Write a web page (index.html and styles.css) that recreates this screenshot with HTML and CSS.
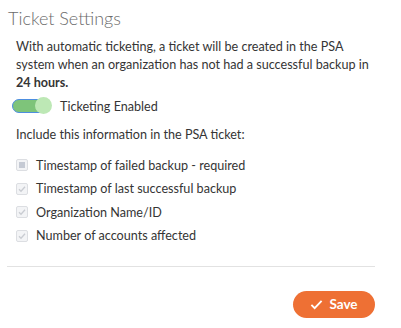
FILE: index.html
```html
<!DOCTYPE html>
<html>
<head>
<meta charset="utf-8">
<link rel="stylesheet" href="styles.css">
</head>
<body>
<div class="panel">
  <h2 class="title">Ticket Settings</h2>
  <div class="content">
    <p class="desc">With automatic ticketing, a ticket will be created in the PSA system when an organization has not had a successful backup in <b>24 hours.</b></p>
    <div class="toggle-row">
      <span class="toggle"><span class="knob"></span></span>
      <span class="toggle-label">Ticketing Enabled</span>
    </div>
    <p class="include">Include this information in the PSA ticket:</p>
    <ul class="checks">
      <li><span class="box"><span class="dot"></span></span>Timestamp of failed backup - required</li>
      <li><span class="box"><svg viewBox="0 0 12 12" width="12" height="12"><path d="M3 6.3 L5 8.3 L9 3.8" fill="none" stroke="#c9ccd2" stroke-width="1.3"/></svg></span>Timestamp of last successful backup</li>
      <li><span class="box"><svg viewBox="0 0 12 12" width="12" height="12"><path d="M3 6.3 L5 8.3 L9 3.8" fill="none" stroke="#c9ccd2" stroke-width="1.3"/></svg></span>Organization Name/ID</li>
      <li><span class="box"><svg viewBox="0 0 12 12" width="12" height="12"><path d="M3 6.3 L5 8.3 L9 3.8" fill="none" stroke="#c9ccd2" stroke-width="1.3"/></svg></span>Number of accounts affected</li>
    </ul>
  </div>
  <hr class="divider">
  <div class="actions">
    <button class="save"><svg viewBox="0 0 14 14" width="13" height="13"><path d="M1.5 7.5 L5 11 L12.5 3" fill="none" stroke="#fff" stroke-width="2"/></svg>Save</button>
  </div>
</div>
</body>
</html>
```
FILE: styles.css
```css
body{margin:0;background:#fff;font-family:Lato,"Open Sans",sans-serif;color:#353535}
.panel{padding:6px 26px 0 7px;width:368px}
.title{margin:0 0 0 1px;font-weight:300;font-size:18px;line-height:24px;color:#6b6b6b}
.content{padding:0 0 0 9px}
.desc{margin:8px 0 0;font-size:12.6px;line-height:18px}
.desc b{font-weight:700}
.toggle-row{display:flex;align-items:center;margin:5px 0 0 -4px;height:18px}
.toggle{position:relative;width:36px;height:12px;border:1.5px solid #4d8ee0;border-radius:8px;background:#7ec47a;box-sizing:content-box}
.knob{position:absolute;right:-3px;top:-3.5px;width:17px;height:17px;border-radius:50%;background:#bde8b5}
.toggle-label{margin-left:10px;font-size:12.6px}
.include{margin:10px 0 0;font-size:12.6px;line-height:19px}
.checks{list-style:none;margin:9.5px 0 0;padding:0}
.checks li{display:flex;align-items:center;height:23.5px;font-size:12.6px}
.box{width:12px;height:12px;border:1px solid #dcdee2;background:#f3f4f6;border-radius:2px;margin-right:8px;display:flex;align-items:center;justify-content:center;box-sizing:border-box}
.box svg{display:block;flex:none}
.dot{width:6px;height:6px;background:#c5cad4}
.divider{border:0;border-top:1.5px solid #e2e2e2;margin:18.5px 0 0;height:0}
.actions{display:flex;justify-content:flex-end;margin-top:23.5px}
.save{display:flex;align-items:center;gap:6px;height:27px;width:82px;justify-content:center;border:0;border-radius:14px;background:#ee7034;color:#fff;font-family:Lato,sans-serif;font-weight:700;font-size:13.5px;padding:0}
```
